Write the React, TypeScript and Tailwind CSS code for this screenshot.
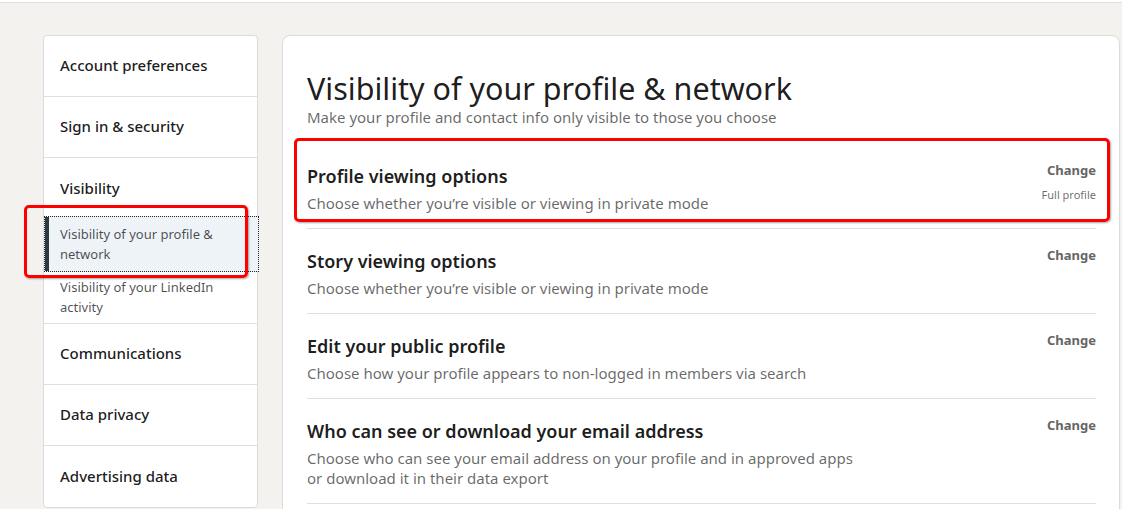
import React from "react";

const font = { fontFamily: '"Noto Sans", "Open Sans", Arial, sans-serif' };

function NavRow({ label, last }: { label: string; last?: boolean }) {
  return (
    <div className={`h-[61px] flex items-center px-4 pb-[1px] ${last ? "h-[60px]" : "border-b border-[#e0dfdc]"}`}>
      <span className="text-[15px] font-medium text-[#000000e6]">{label}</span>
    </div>
  );
}

function SettingRow({
  title,
  desc,
  value,
}: {
  title: string;
  desc: React.ReactNode;
  value?: string;
}) {
  return (
    <div className="flex justify-between border-b border-[#e0dfdc] pt-5 pb-[15px]">
      <div>
        <div className="text-[18px] leading-6 font-semibold text-[#000000e6]">{title}</div>
        <div className="mt-[5px] text-[15px] leading-5 text-[#00000099]">{desc}</div>
      </div>
      <div className="flex flex-col items-end -mt-[4px]">
        <span className="text-[13px] leading-5 font-bold text-[#666666]">Change</span>
        {value && <span className="mt-[7px] text-[11px] leading-4 text-[#00000099]">{value}</span>}
      </div>
    </div>
  );
}

export default function App() {
  return (
    <div className="relative w-[1122px] h-[509px] overflow-hidden bg-[#f3f2ef]" style={font}>
      <div className="h-[3px] bg-white border-b border-[#dddddd]" />
      <div className="flex items-start pl-[43px] pt-[32px] gap-[24px]">
        {/* Sidebar */}
        <div className="w-[215px] bg-white border border-[#dcdbd8] rounded-[4px]">
          <NavRow label="Account preferences" />
          <NavRow label="Sign in & security" />
          <div className="border-b border-[#e0dfdc]">
            <div className="pt-[18px] pb-[16px] px-4 leading-6">
              <span className="text-[15px] font-medium text-[#000000e6]">Visibility</span>
            </div>
            <div className="-mr-[2px] border border-dotted border-[#222] bg-[#eef3f8] flex">
              <div className="w-[4px] bg-[#2d3a40]" />
              <div className="pl-[11px] pt-[7px] pb-[7px] pr-4 text-[13px] leading-5 text-[#000000b3]">
                Visibility of your profile &amp;
                <br />
                network
              </div>
            </div>
            <div className="px-4 pt-[5px] pb-[6px] text-[13px] leading-5 text-[#000000b3]">
              Visibility of your LinkedIn
              <br />
              activity
            </div>
          </div>
          <NavRow label="Communications" />
          <NavRow label="Data privacy" />
          <NavRow label="Advertising data" last />
        </div>

        {/* Main */}
        <div className="w-[838px] h-[520px] bg-white border border-[#dcdbd8] rounded-t-[8px] pl-6 pr-[23px] pt-[33px]">
          <h1 className="text-[30.5px] leading-[38px] font-normal text-[#000000e6]">
            Visibility of your profile &amp; network
          </h1>
          <p className="text-[15px] leading-5 text-[#00000099]">
            Make your profile and contact info only visible to those you choose
          </p>
          <div className="mt-[17px]">
            <SettingRow
              title="Profile viewing options"
              desc="Choose whether you’re visible or viewing in private mode"
              value="Full profile"
            />
            <SettingRow
              title="Story viewing options"
              desc="Choose whether you’re visible or viewing in private mode"
            />
            <SettingRow
              title="Edit your public profile"
              desc="Choose how your profile appears to non-logged in members via search"
            />
            <SettingRow
              title="Who can see or download your email address"
              desc={
                <>
                  Choose who can see your email address on your profile and in approved apps
                  <br />
                  or download it in their data export
                </>
              }
            />
          </div>
        </div>
      </div>

      {/* Annotation boxes */}
      <div className="absolute left-[24px] top-[205px] w-[224px] h-[73px] border-[3px] border-[#ff0000] rounded-[5px] shadow-[1px_1px_2px_rgba(0,0,0,0.35)]" />
      <div className="absolute left-[294px] top-[138px] w-[816px] h-[84px] border-[3px] border-[#ff0000] rounded-[5px] shadow-[1px_1px_2px_rgba(0,0,0,0.35)]" />
    </div>
  );
}
